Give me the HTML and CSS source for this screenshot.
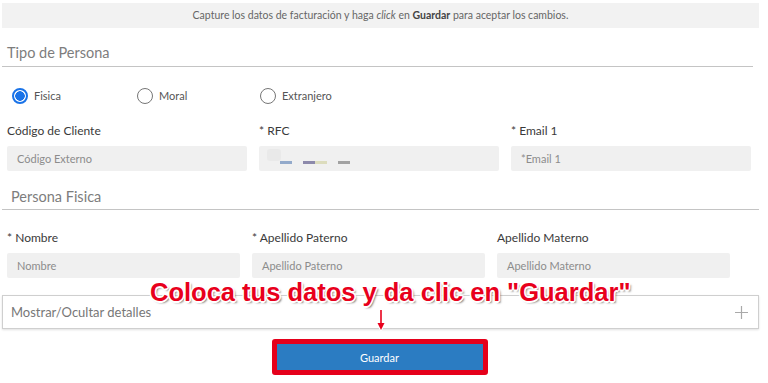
FILE: index.html
```html
<!DOCTYPE html>
<html lang="es">
<head>
<meta charset="utf-8">
<title>Datos de facturación</title>
<link rel="stylesheet" href="styles.css">
</head>
<body>
<div class="page">
  <div class="notice">Capture los datos de facturación y haga <i>click</i> en <b>Guardar</b> para aceptar los cambios.</div>

  <div class="section-title title-tipo">Tipo de Persona</div>

  <div class="radios">
    <label class="radio"><span class="circle checked"></span><span>Fisica</span></label>
    <label class="radio"><span class="circle"></span><span>Moral</span></label>
    <label class="radio"><span class="circle"></span><span>Extranjero</span></label>
  </div>

  <div class="fields fields-1">
    <div class="field">
      <div class="label">Código de Cliente</div>
      <div class="input">Código Externo</div>
    </div>
    <div class="field">
      <div class="label">* RFC</div>
      <div class="input rfc"><span class="blob"></span><span class="d d1"></span><span class="d d2"></span><span class="d d3"></span><span class="d d4"></span></div>
    </div>
    <div class="field">
      <div class="label">* Email 1</div>
      <div class="input">*Email 1</div>
    </div>
  </div>

  <div class="section-title title-fisica">Persona Fisica</div>

  <div class="fields fields-2">
    <div class="field">
      <div class="label">* Nombre</div>
      <div class="input">Nombre</div>
    </div>
    <div class="field">
      <div class="label">* Apellido Paterno</div>
      <div class="input">Apellido Paterno</div>
    </div>
    <div class="field">
      <div class="label">Apellido Materno</div>
      <div class="input">Apellido Materno</div>
    </div>
  </div>

  <div class="details">
    <span>Mostrar/Ocultar detalles</span>
    <svg class="plus" width="13" height="13" viewBox="0 0 13 13"><path d="M6.5 0V13M0 6.5H13" stroke="#a9a9a9" stroke-width="1.2" fill="none"/></svg>
  </div>

  <div class="actions">
    <div class="highlight"><button class="btn">Guardar</button></div>
  </div>

  <div class="callout">Coloca tus datos y da clic en "Guardar"</div>
  <svg class="arrow" width="14" height="24" viewBox="0 0 14 24">
    <path d="M7 1V15" stroke="#fff" stroke-width="3.5" fill="none"/>
    <path d="M2.5 13L11.5 13L7 21Z" fill="#fff" stroke="#fff" stroke-width="2"/>
    <path d="M7 1V15" stroke="#e8001c" stroke-width="1.6" fill="none"/>
    <path d="M3.5 14L10.5 14L7 21Z" fill="#e8001c"/>
  </svg>
</div>
</body>
</html>
```

FILE: styles.css
```css
* { box-sizing: border-box; }
html, body { margin: 0; padding: 0; background: #fff; }
body {
  font-family: Lato, "Liberation Sans", Arial, sans-serif;
  color: #333;
  width: 768px;
  height: 383px;
  overflow: hidden;
}
.page {
  position: relative;
  padding: 3px 9px 0 2px;
}
.notice {
  height: 25px;
  line-height: 25px;
  background: #f2f2f2;
  text-align: center;
  font-size: 10.5px;
  color: #666;
}
.notice i { font-style: italic; }
.notice b { color: #444; font-weight: 700; }
.section-title {
  font-size: 14.5px;
  line-height: 20px;
  color: #7d7d7d;
  font-weight: 400;
  border-bottom: 1px solid #c4c4c4;
}
.title-tipo {
  margin-top: 15px;
  padding: 0 0 3px 5px;
  margin-right: 6px;
}
.title-fisica {
  margin-top: 16px;
  padding: 0 0 2px 9px;
}
.radios {
  display: flex;
  margin-top: 20px;
  padding-left: 10px;
  height: 17px;
  align-items: center;
}
.radio {
  display: flex;
  align-items: center;
  gap: 6px;
  width: 125px;
  font-size: 11px;
  color: #555;
}
.radio:nth-child(2) { width: 123px; }
.circle {
  width: 16px;
  height: 16px;
  border-radius: 50%;
  border: 1px solid #767676;
  background: #fff;
  flex: none;
}
.circle.checked {
  border: 2px solid #1a73e8;
  background: radial-gradient(circle, #1a73e8 0 4.5px, #fff 5px);
}
.fields {
  display: grid;
  column-gap: 12px;
  margin-left: 5px;
}
.fields-1 {
  grid-template-columns: 240px 240px 240px;
  margin-top: 19px;
}
.fields-2 {
  grid-template-columns: 233px 233px 233px;
  margin-top: 20px;
}
.label {
  font-size: 12px;
  line-height: 16px;
  color: #3a3a3a;
}
.input {
  margin-top: 7px;
  height: 25px;
  line-height: 25px;
  background: #f0f0f0;
  padding-left: 10px;
  font-size: 11px;
  color: #8c8c8c;
  border-radius: 2px;
}
.rfc {
  display: flex;
  align-items: center;
  padding-left: 8px;
}
.blob {
  width: 14px;
  height: 12px;
  background: #e9e9e9;
  border-radius: 3px;
  margin-right: -1px;
  align-self: flex-start;
  margin-top: 3px;
}
.d {
  height: 3px;
  width: 12px;
  margin-top: 8px;
}
.d1 { background: #93aacb; }
.d2 { background: #8c89ab; margin-left: 11px; }
.d3 { background: #dcdcbd; }
.d4 { background: #a2a2a2; margin-left: 11px; }
.details {
  margin-top: 17px;
  height: 34px;
  border: 1px solid #cfcfcf;
  box-shadow: 0 1px 2px rgba(0,0,0,0.12);
  display: flex;
  align-items: center;
  justify-content: space-between;
  padding: 0 10px 0 8px;
  font-size: 13px;
  color: #777;
}
.actions {
  display: flex;
  justify-content: center;
  margin-top: 10px;
  padding-right: 8px;
}
.highlight {
  border: 5px solid #e5001b;
  border-radius: 3px;
  width: 216px;
  height: 36px;
  margin-left: 6px;
}
.btn {
  display: block;
  width: 100%;
  height: 100%;
  border: 0;
  margin: 0;
  background: #2b7cc2;
  color: #fff;
  font-family: Lato, "Liberation Sans", Arial, sans-serif;
  font-size: 11px;
}
.callout {
  position: absolute;
  left: 150px;
  top: 280px;
  font-family: "Liberation Sans", Arial, sans-serif;
  font-weight: 700;
  font-size: 25.5px;
  line-height: 25px;
  white-space: nowrap;
  color: #e8001c;
  text-shadow:
    1.5px 0 0 #fff, -1.5px 0 0 #fff, 0 1.5px 0 #fff, 0 -1.5px 0 #fff,
    1px 1px 0 #fff, -1px -1px 0 #fff, 1px -1px 0 #fff, -1px 1px 0 #fff,
    2px 2px 2px rgba(0,0,0,0.5);
}
.arrow {
  position: absolute;
  left: 374px;
  top: 309px;
}
```
